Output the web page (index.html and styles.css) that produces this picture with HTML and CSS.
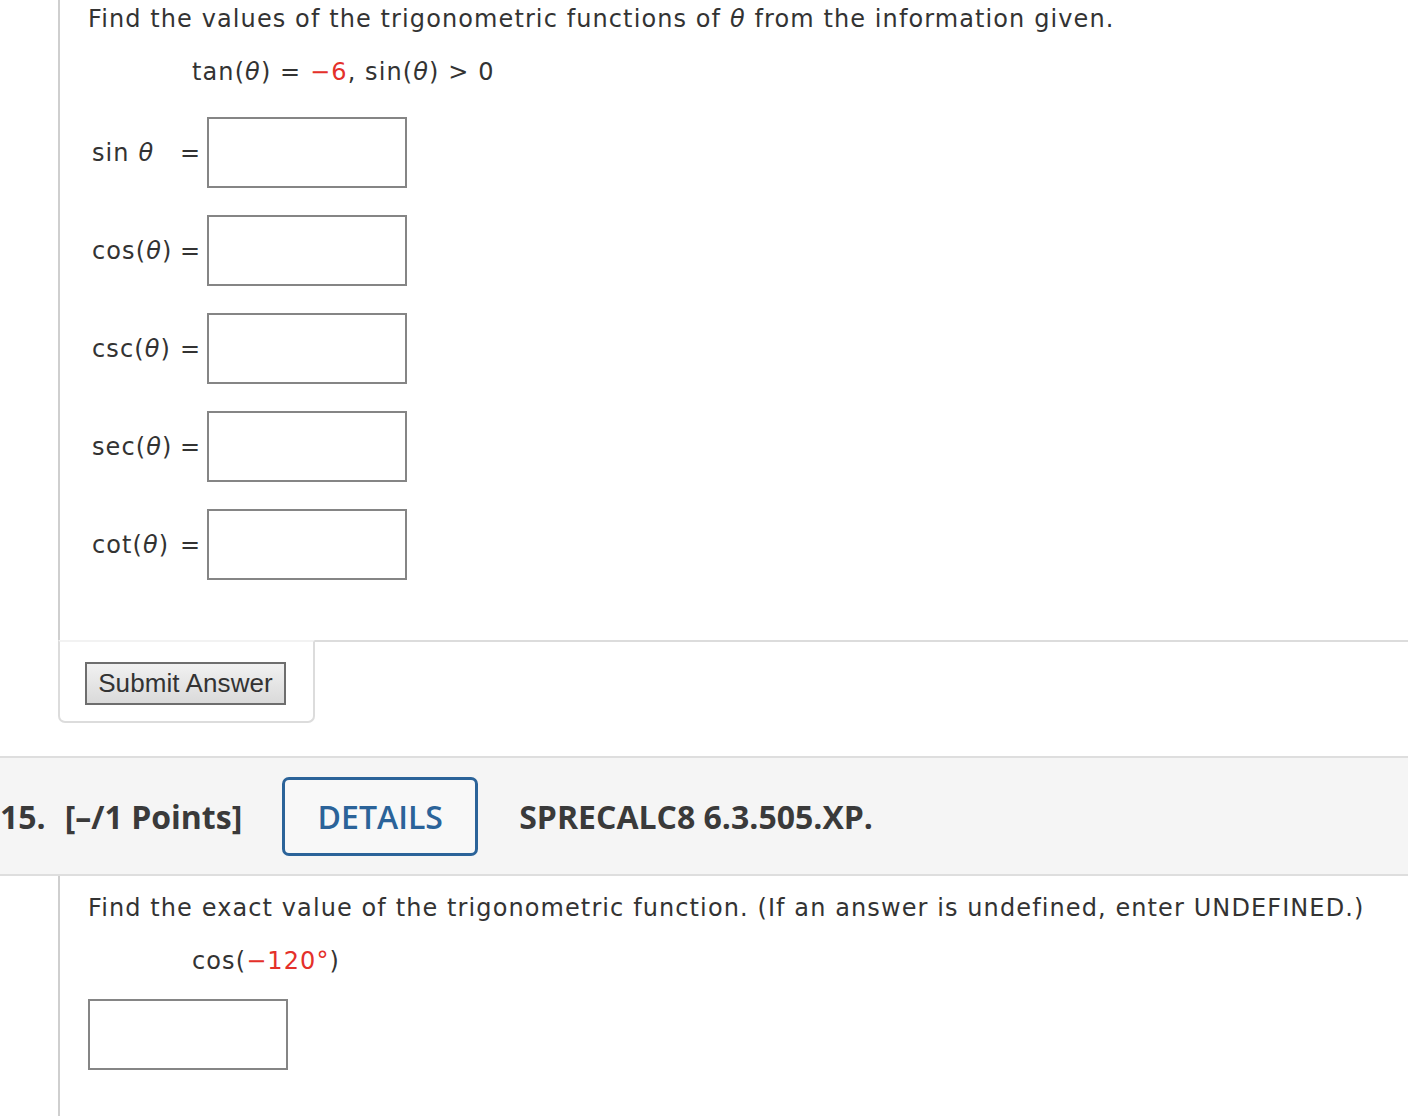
FILE: index.html
```html
<!DOCTYPE html>
<html>
<head>
<meta charset="utf-8">
<link rel="stylesheet" href="styles.css">
</head>
<body>
<div class="question">
  <div class="q-body">
    <p class="prompt">Find the values of the trigonometric functions of <i>θ</i> from the information given.</p>
    <p class="given">tan(<i>θ</i>) = <span class="red">−6</span>, sin(<i>θ</i>) &gt; 0</p>
    <div class="answers">
      <span class="lab">sin <i>θ</i></span><span class="eq">=</span><span class="box"></span>
      <span class="lab">cos(<i>θ</i>)</span><span class="eq">=</span><span class="box"></span>
      <span class="lab">csc(<i>θ</i>)</span><span class="eq">=</span><span class="box"></span>
      <span class="lab">sec(<i>θ</i>)</span><span class="eq">=</span><span class="box"></span>
      <span class="lab">cot(<i>θ</i>)</span><span class="eq">=</span><span class="box"></span>
    </div>
  </div>
  <div class="submit-tab"><button class="submit">Submit Answer</button></div>
</div>

<div class="qhead">
  <span class="num">15.</span>
  <span class="pts">[–/1 Points]</span>
  <span class="details">DETAILS</span>
  <span class="code">SPRECALC8 6.3.505.XP.</span>
</div>

<div class="q2">
  <p class="prompt">Find the exact value of the trigonometric function. (If an answer is undefined, enter UNDEFINED.)</p>
  <p class="given">cos(<span class="red">−120°</span>)</p>
  <span class="box"></span>
</div>
</body>
</html>
```

FILE: styles.css
```css
html, body {
  margin: 0;
  padding: 0;
  background: #fff;
}
body {
  font-family: "DejaVu Sans", Verdana, sans-serif;
  color: #333;
  font-size: 24px;
  letter-spacing: 1.1px;
}
p { margin: 0; }
i { font-style: italic; }
.red { color: #e4302a; }

.question {
  margin-left: 58px;
}
.q-body {
  border-left: 2px solid #cfcfcf;
  border-bottom: 2px solid #dcdcdc;
  padding: 2px 0 60px 28px;
}
.prompt {
  line-height: 34px;
}
.given {
  margin-top: 19px;
  padding-left: 104px;
  line-height: 34px;
}
.answers {
  margin-top: 28px;
  display: grid;
  grid-template-columns: 88px 27px 200px;
  row-gap: 27px;
  align-items: center;
  padding-left: 4px;
}
.box {
  display: block;
  width: 196px;
  height: 67px;
  border: 2px solid #858585;
  background: #fff;
}

.submit-tab {
  width: 253px;
  height: 79px;
  margin-top: -2px;
  border: 2px solid #dcdcdc;
  border-top-color: #f2f2f2;
  border-radius: 0 0 7px 7px;
}
.submit {
  margin: 20px 0 0 25px;
  width: 201px;
  height: 43px;
  border: 2px solid #6e6e6e;
  background: linear-gradient(#f1f1f1, #dadada);
  font-family: "Liberation Sans", Arial, sans-serif;
  font-size: 26px;
  letter-spacing: 0.1px;
  color: #333;
  padding: 0;
  border-radius: 0;
}

.qhead {
  margin-top: 33px;
  height: 116px;
  background: #f5f5f5;
  border-top: 2px solid #dedede;
  border-bottom: 2px solid #dedede;
  display: flex;
  align-items: center;
  font-family: "Open Sans", sans-serif;
  font-weight: 700;
  font-size: 32px;
  letter-spacing: 0;
  color: #3a3a3a;
}
.pts { margin-left: 19px; }
.details {
  margin-left: 40px;
  width: 196px;
  height: 79px;
  box-sizing: border-box;
  border: 3px solid #2b6399;
  border-radius: 7px;
  display: flex;
  align-items: center;
  justify-content: center;
  color: #2b6399;
  font-weight: 600;
  background: #f8f8f8;
}
.code { margin-left: 41px; }

.q2 {
  margin-left: 58px;
  border-left: 2px solid #cfcfcf;
  padding: 15px 0 0 28px;
  height: 240px;
  box-sizing: border-box;
}
.q2 .given { margin-top: 19px; }
.q2 .box { margin-top: 21px; }
```
